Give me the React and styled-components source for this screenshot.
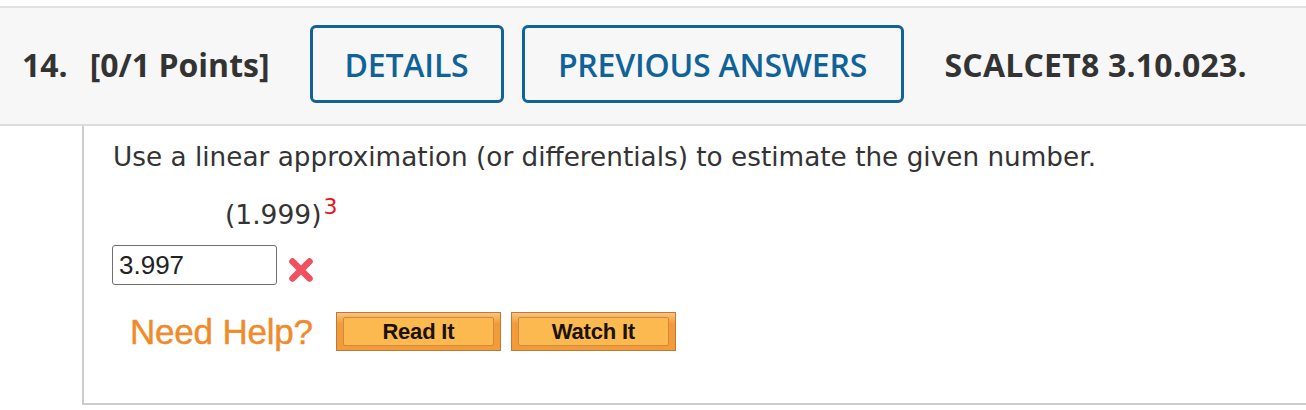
import React from 'react';
import styled, { createGlobalStyle } from 'styled-components';

const GlobalStyle = createGlobalStyle`
  html, body {
    margin: 0;
    padding: 0;
    background: #fff;
  }
`;

const Page = styled.div`
  padding-top: 6px;
  width: 1306px;
  height: 410px;
  box-sizing: border-box;
  overflow: hidden;
`;

const Header = styled.div`
  display: flex;
  align-items: center;
  height: 112px;
  padding-left: 22px;
  padding-bottom: 4px;
  background: #f7f7f7;
  border-top: 2px solid #e0e0e0;
  border-bottom: 2px solid #dcdcdc;
  font-family: "Open Sans", sans-serif;
  font-weight: 700;
  font-size: 32px;
  color: #333;
`;

const Number = styled.span`
  margin-right: 22px;
`;

const Points = styled.span`
  margin-right: 40px;
`;

const OutlineButton = styled.div`
  flex: none;
  height: 78px;
  box-sizing: border-box;
  display: flex;
  align-items: center;
  justify-content: center;
  width: ${p => p.$width}px;
  margin-right: ${p => p.$gap}px;
  border: 3px solid #0f6398;
  border-radius: 6px;
  color: #0f6398;
  font-weight: 600;
  letter-spacing: -0.2px;
`;

const Code = styled.span`
  letter-spacing: 0.2px;
`;

const Content = styled.div`
  margin-left: 82px;
  height: 279px;
  box-sizing: border-box;
  border-left: 2px solid #cccccc;
  border-bottom: 2px solid #cccccc;
  padding: 16px 0 0 29px;
  font-family: "DejaVu Sans", Verdana, sans-serif;
  color: #333;
`;

const Prompt = styled.p`
  margin: 0;
  font-size: 26.3px;
  line-height: 30px;
`;

const Expression = styled.div`
  margin: 28px 0 0 112px;
  font-size: 26.5px;
  line-height: 30px;
`;

const Sup = styled.sup`
  color: #e8141c;
  font-size: 22px;
  line-height: 0;
  vertical-align: 0;
  position: relative;
  top: -10px;
  margin-left: 2px;
`;

const AnswerRow = styled.div`
  display: flex;
  align-items: center;
  margin-top: 15px;
  margin-left: -1px;
`;

const AnswerBox = styled.div`
  width: 165px;
  height: 40px;
  box-sizing: border-box;
  border: 1px solid #707070;
  border-radius: 3px;
  padding-left: 6px;
  font-family: "Liberation Sans", Arial, sans-serif;
  font-size: 26px;
  line-height: 38px;
  color: #222;
`;

const WrongMark = styled.svg`
  margin-left: 9px;
  margin-top: 10px;
`;

const HelpRow = styled.div`
  display: flex;
  align-items: center;
  margin-top: 26px;
  margin-left: 17px;
`;

const HelpLabel = styled.span`
  font-family: "Liberation Sans", Arial, sans-serif;
  font-size: 35px;
  line-height: 41px;
  color: #f08a2a;
  margin-right: 23px;
  letter-spacing: -0.2px;
  -webkit-text-stroke: 0.4px #f08a2a;
`;

const HelpButton = styled.div`
  width: 165px;
  height: 39px;
  box-sizing: border-box;
  margin-right: 10px;
  padding: 4px 6px 4px 6px;
  background: linear-gradient(#fbc47c, #f49a36 30%, #f49a36);
  border: 1px solid #b97a3e;
`;

const HelpInner = styled.div`
  height: 100%;
  box-sizing: border-box;
  border: 1px solid #c98b45;
  border-radius: 2px;
  background: #fbb94f;
  display: flex;
  align-items: center;
  justify-content: center;
  font-family: "Liberation Sans", Arial, sans-serif;
  font-weight: 700;
  font-size: 22px;
  letter-spacing: -0.2px;
  color: #1a1207;
`;

export default function App() {
  return (
    <Page>
      <GlobalStyle />
      <Header>
        <Number>14.</Number>
        <Points>[0/1 Points]</Points>
        <OutlineButton $width={194} $gap={18}>DETAILS</OutlineButton>
        <OutlineButton $width={382} $gap={41}>PREVIOUS ANSWERS</OutlineButton>
        <Code>SCALCET8 3.10.023.</Code>
      </Header>
      <Content>
        <Prompt>Use a linear approximation (or differentials) to estimate the given number.</Prompt>
        <Expression>
          (1.999)<Sup>3</Sup>
        </Expression>
        <AnswerRow>
          <AnswerBox>3.997</AnswerBox>
          <WrongMark width="30" height="30" viewBox="0 0 30 30">
            <path d="M6.5 6.5 L23.5 23.5 M23.5 6.5 L6.5 23.5" stroke="#ef3e4f" strokeWidth="6.5" strokeLinecap="round" opacity="0.9" />
          </WrongMark>
        </AnswerRow>
        <HelpRow>
          <HelpLabel>Need Help?</HelpLabel>
          <HelpButton><HelpInner>Read It</HelpInner></HelpButton>
          <HelpButton><HelpInner>Watch It</HelpInner></HelpButton>
        </HelpRow>
      </Content>
    </Page>
  );
}
